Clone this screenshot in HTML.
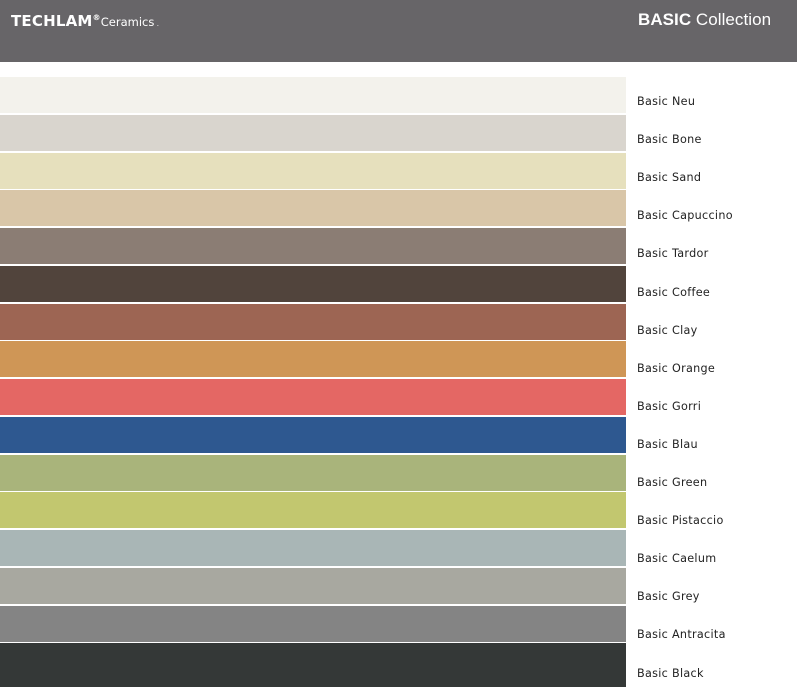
<!DOCTYPE html>
<html><head><style>
body{margin:0;width:797px;height:687px;overflow:hidden;background:#fff;font-family:"DejaVu Sans","Liberation Sans",sans-serif;position:relative}
.h{position:absolute;left:0;top:0;width:797px;height:62px;background:#676568;color:#fff}
.s{position:absolute;left:0;width:626px;height:36px}
.l{position:absolute;left:637px;font-size:11.2px;color:#222;line-height:14px;letter-spacing:0.3px}
</style></head><body>
<div class="h">
<div style="position:absolute;left:11px;top:12px;font-weight:bold;font-size:15px;letter-spacing:0.2px">TECHLAM<sup style="font-size:8px">®</sup><span style="font-weight:normal;font-size:11.5px;letter-spacing:0">Ceramics</span><span style="font-size:7px;font-weight:normal"> .</span></div>
<div style="position:absolute;left:638px;top:10px;font-size:17px;font-family:'Liberation Sans',sans-serif;letter-spacing:0.05px"><b>BASIC</b> Collection</div>
</div>
<div id="c"></div>
<script>
var d=[["Neu","#f3f2ec"],["Bone","#d9d5ce"],["Sand","#e6e0bd"],["Capuccino","#d9c6a8"],["Tardor","#8b7d74"],["Coffee","#51443c"],["Clay","#9d6553"],["Orange","#cf9656"],["Gorri","#e46764"],["Blau","#2e5890"],["Green","#a9b47b"],["Pistaccio","#c2c76f"],["Caelum","#a9b6b6"],["Grey","#a8a8a0"],["Antracita","#848484"],["Black","#343837"]];
var h="";d.forEach(function(x,i){var t=Math.round(77+37.75*i);h+='<div class="s" style="top:'+t+'px;background:'+x[1]+(i==15?';height:44px':'')+'"></div><div class="l" style="top:'+Math.round(95+38.1*i)+'px">Basic '+x[0]+'</div>';});
document.getElementById("c").innerHTML=h;
</script>
</body></html>
